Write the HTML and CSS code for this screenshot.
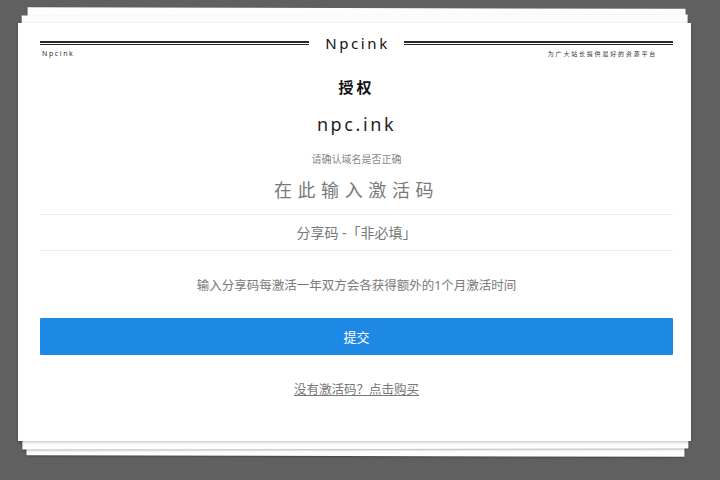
FILE: index.html
```html
<!DOCTYPE html>
<html lang="zh-CN">
<head>
<meta charset="utf-8">
<title>Npcink 授权</title>
<link rel="stylesheet" href="styles.css">
</head>
<body>
<div class="stack">
  <div class="sheet sheet-back"></div>
  <div class="sheet sheet-mid"></div>
  <div class="card">
    <header class="masthead">
      <div class="side side-left">
        <div class="rule"></div>
        <div class="tag">Npcink</div>
      </div>
      <div class="brand">Npcink</div>
      <div class="side side-right">
        <div class="rule"></div>
        <div class="tag tag-cn">为广大站长提供最好的资源平台</div>
      </div>
    </header>
    <h1 class="title">授权</h1>
    <div class="domain">npc.ink</div>
    <div class="hint">请确认域名是否正确</div>
    <form class="form">
      <input class="field field-code" type="text" placeholder="在此输入激活码">
      <input class="field field-share" type="text" placeholder="分享码 -「非必填」">
      <p class="info">输入分享码每激活一年双方会各获得额外的1个月激活时间</p>
      <button class="submit" type="button">提交</button>
      <a class="buy" href="#">没有激活码？点击购买</a>
    </form>
  </div>
</div>
</body>
</html>
```
FILE: styles.css
```css
html, body {
  margin: 0;
  padding: 0;
}
body {
  background: #606060;
  width: 720px;
  height: 480px;
  overflow: hidden;
  font-family: "Noto Sans", "Noto Sans CJK SC", sans-serif;
}
.stack {
  position: relative;
  margin: 23px 0 0 18px;
  width: 673px;
  height: 418px;
}
.sheet {
  position: absolute;
  background: #fdfdfd;
  box-shadow: 0 1px 2px rgba(0, 0, 0, 0.3);
}
.sheet-back {
  left: 9px;
  top: -15px;
  width: 658px;
  height: 448px;
  transform: rotate(0.15deg);
}
.sheet-mid {
  left: 4px;
  top: -8px;
  width: 666px;
  height: 434px;
  transform: rotate(-0.1deg);
}
.card {
  position: relative;
  box-sizing: border-box;
  width: 673px;
  height: 418px;
  padding: 10px 18px 0 22px;
  background: #fff;
  box-shadow: 0 1px 3px rgba(0, 0, 0, 0.25);
  display: flex;
  flex-direction: column;
  align-items: stretch;
}
.masthead {
  display: flex;
  align-items: flex-start;
}
.side {
  flex: 1;
  padding-top: 8px;
}
.rule {
  height: 1px;
  border-top: 2px solid #2a2a2a;
  border-bottom: 1px solid #2a2a2a;
}
.tag {
  margin-top: 5px;
  font-size: 7px;
  line-height: 8px;
  letter-spacing: 1.6px;
  color: #333;
  padding-left: 2px;
}
.tag-cn {
  text-align: right;
  font-size: 6px;
  letter-spacing: 1.8px;
  padding-right: 16px;
}
.brand {
  padding: 0 14px 0 16px;
  font-size: 15px;
  line-height: 20px;
  letter-spacing: 2.6px;
  color: #111;
}
.title {
  margin: 19px 0 0;
  text-align: center;
  font-size: 15px;
  line-height: 20px;
  font-weight: 700;
  letter-spacing: 3px;
  color: #111;
}
.domain {
  margin-top: 15px;
  text-align: center;
  font-size: 18px;
  line-height: 24px;
  letter-spacing: 2.6px;
  color: #222;
}
.hint {
  margin-top: 16px;
  text-align: center;
  font-size: 10px;
  line-height: 14px;
  color: #8a8a8a;
}
.form {
  display: flex;
  flex-direction: column;
  align-items: stretch;
}
.field {
  box-sizing: content-box;
  display: block;
  margin: 0;
  padding: 0;
  border: 0;
  border-bottom: 1.5px solid #ececec;
  outline: none;
  background: transparent;
  text-align: center;
  font-family: "Noto Sans", "Noto Sans CJK SC", sans-serif;
  color: #555;
}
.field-code {
  height: 48px;
  font-size: 18px;
  letter-spacing: 5.6px;
}
.field-share {
  height: 35px;
  font-size: 14px;
}
.field::placeholder {
  color: #7a7a7a;
  opacity: 1;
}
.field-share::placeholder {
  color: #777;
}
.info {
  margin: 26px 0 0;
  text-align: center;
  font-size: 12.5px;
  line-height: 18px;
  color: #7a7a7a;
}
.submit {
  margin-top: 23px;
  height: 37px;
  border: 0;
  border-radius: 1px;
  background: #1e88e5;
  color: #fff;
  font-family: "Noto Sans", "Noto Sans CJK SC", sans-serif;
  font-size: 13px;
}
.buy {
  align-self: center;
  margin-top: 26px;
  font-size: 12.5px;
  line-height: 18px;
  color: #777;
  text-decoration: underline;
}
```
